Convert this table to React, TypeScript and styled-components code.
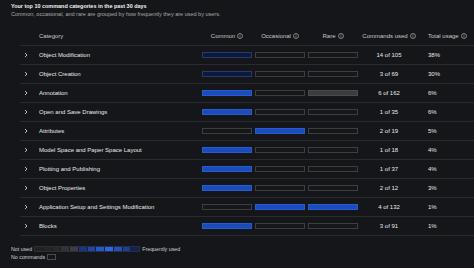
import React from "react";
import styled, { createGlobalStyle } from "styled-components";

const GlobalStyle = createGlobalStyle`
  html, body {
    margin: 0;
    padding: 0;
    background: #151619;
  }
  body {
    font-family: "Liberation Sans", Arial, sans-serif;
    color: #e4e4e4;
  }
`;

const Page = styled.div`
  width: 474px;
  height: 268px;
  box-sizing: border-box;
  padding: 3px 0 0 11px;
  overflow: hidden;
  background: #151619;
`;

const Title = styled.div`
  font-size: 5.45px;
  font-weight: bold;
  line-height: 7px;
  color: #f2f2f2;
`;

const Subtitle = styled.div`
  margin-top: 1px;
  font-size: 5.5px;
  line-height: 7px;
  color: #a9a9a9;
`;

const Table = styled.div`
  margin: 9px 0 0 9px;
  display: flex;
  flex-direction: column;
`;

const Row = styled.div<{ $header?: boolean }>`
  display: grid;
  grid-template-columns: 16px 160px 50px 50px 50px 56px 1fr;
  column-gap: 3px;
  align-items: center;
  height: 18px;
  border-bottom: 1px solid #2a2b2e;
  font-size: 6px;
  color: ${(p) => (p.$header ? "#c8c8c8" : "#e8e8e8")};
`;

const Chevron = styled.div`
  padding-left: 4px;
  display: flex;
  align-items: center;
`;

const HeadCell = styled.div<{ $align?: "left" | "center"; $indent?: number }>`
  display: flex;
  align-items: center;
  gap: 2px;
  justify-content: ${(p) => (p.$align === "left" ? "flex-start" : "center")};
  padding-left: ${(p) => p.$indent ?? 0}px;
  white-space: nowrap;
`;

const Label = styled.div`
  white-space: nowrap;
`;

const Count = styled.div`
  text-align: center;
  white-space: nowrap;
`;

const Usage = styled.div`
  padding-left: 8px;
`;

type Level = "navy" | "blue" | "empty" | "grey";

const barColors: Record<Level, { bg: string; border: string }> = {
  navy: { bg: "#0a1942", border: "#2c3b62" },
  blue: { bg: "#1a4cbb", border: "#2a5bcc" },
  empty: { bg: "#161719", border: "#3d3e40" },
  grey: { bg: "#3b3c3e", border: "#4a4b4d" },
};

const Bar = styled.div<{ $level: Level }>`
  box-sizing: border-box;
  width: 50px;
  height: 6px;
  background: ${(p) => barColors[p.$level].bg};
  border: 1px solid ${(p) => barColors[p.$level].border};
`;

const Legend = styled.div`
  margin-top: 9px;
  display: flex;
  flex-direction: column;
  gap: 1.5px;
  font-size: 5.3px;
  color: #cfcfcf;
`;

const LegendLine = styled.div`
  display: flex;
  align-items: center;
  gap: 2px;
  height: 7px;
`;

const Scale = styled.div`
  display: flex;
  width: 106px;
  height: 6px;
  border: 1px solid #2e2f31;
  box-sizing: border-box;
`;

const Swatch = styled.div<{ $color: string }>`
  flex: 1;
  background: ${(p) => p.$color};
  border-right: 1px solid #1c1d20;
  &:last-child {
    border-right: none;
  }
`;

const EmptySwatch = styled.div`
  box-sizing: border-box;
  width: 9px;
  height: 6px;
  border: 1px solid #4a4b4d;
  background: #151619;
`;

const ChevronIcon = () => (
  <svg width="4" height="6" viewBox="0 0 4 6">
    <path d="M1 1 L3 3 L1 5" fill="none" stroke="#d0d0d0" strokeWidth="0.9" />
  </svg>
);

const InfoIcon = () => (
  <svg width="6" height="6" viewBox="0 0 6 6">
    <circle cx="3" cy="3" r="2.5" fill="none" stroke="#c4c4c4" strokeWidth="0.6" />
    <path d="M3 2.6 V4.4" stroke="#c4c4c4" strokeWidth="0.6" />
    <circle cx="3" cy="1.7" r="0.35" fill="#c4c4c4" />
  </svg>
);

type Category = {
  name: string;
  bars: [Level, Level, Level];
  used: string;
  usage: string;
};

const categories: Category[] = [
  { name: "Object Modification", bars: ["navy", "empty", "empty"], used: "14 of 105", usage: "38%" },
  { name: "Object Creation", bars: ["navy", "empty", "empty"], used: "3 of 69", usage: "30%" },
  { name: "Annotation", bars: ["blue", "empty", "grey"], used: "6 of 162", usage: "6%" },
  { name: "Open and Save Drawings", bars: ["blue", "empty", "empty"], used: "1 of 35", usage: "6%" },
  { name: "Attributes", bars: ["empty", "blue", "empty"], used: "2 of 19", usage: "5%" },
  { name: "Model Space and Paper Space Layout", bars: ["blue", "empty", "empty"], used: "1 of 18", usage: "4%" },
  { name: "Plotting and Publishing", bars: ["blue", "empty", "empty"], used: "1 of 37", usage: "4%" },
  { name: "Object Properties", bars: ["blue", "empty", "empty"], used: "2 of 12", usage: "3%" },
  { name: "Application Setup and Settings Modification", bars: ["empty", "blue", "blue"], used: "4 of 132", usage: "1%" },
  { name: "Blocks", bars: ["blue", "empty", "empty"], used: "3 of 91", usage: "1%" },
];

const scale = [
  "#202123", "#242527", "#28292b", "#323336", "#3a3d44", "#17348a",
  "#1c46b5", "#2257d8", "#2a64f5", "#1f50c6", "#193e98", "#0e2262",
];

export default function App() {
  return (
    <Page>
      <GlobalStyle />
      <Title>Your top 10 command categories in the past 30 days</Title>
      <Subtitle>
        Common, occasional, and rare are grouped by how frequently they are used by users.
      </Subtitle>
      <Table>
        <Row $header>
          <div />
          <HeadCell $align="left">Category</HeadCell>
          <HeadCell>
            Common <InfoIcon />
          </HeadCell>
          <HeadCell>
            Occasional <InfoIcon />
          </HeadCell>
          <HeadCell>
            Rare <InfoIcon />
          </HeadCell>
          <HeadCell>
            Commands used <InfoIcon />
          </HeadCell>
          <HeadCell $align="left" $indent={8}>
            Total usage <InfoIcon />
          </HeadCell>
        </Row>
        {categories.map((c) => (
          <Row key={c.name}>
            <Chevron>
              <ChevronIcon />
            </Chevron>
            <Label>{c.name}</Label>
            {c.bars.map((b, i) => (
              <Bar key={i} $level={b} />
            ))}
            <Count>{c.used}</Count>
            <Usage>{c.usage}</Usage>
          </Row>
        ))}
      </Table>
      <Legend>
        <LegendLine>
          Not used
          <Scale>
            {scale.map((s, i) => (
              <Swatch key={i} $color={s} />
            ))}
          </Scale>
          Frequently used
        </LegendLine>
        <LegendLine>
          No commands
          <EmptySwatch />
        </LegendLine>
      </Legend>
    </Page>
  );
}
